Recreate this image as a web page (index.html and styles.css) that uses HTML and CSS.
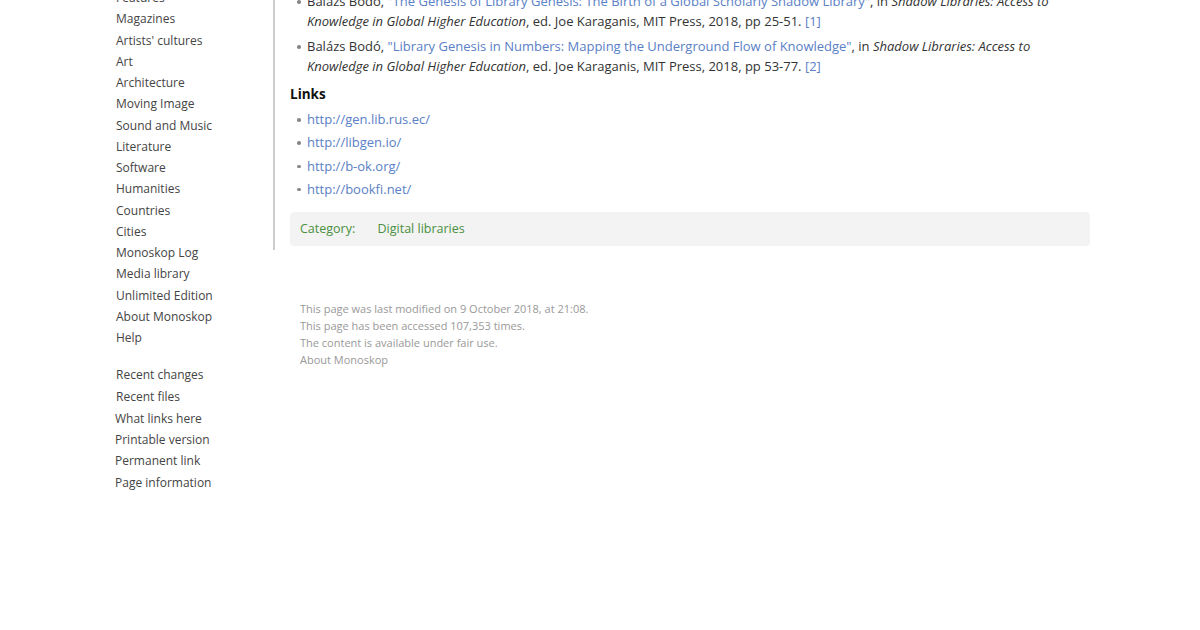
FILE: index.html
```html
<!DOCTYPE html>
<html lang="en">
<head>
    <meta charset="UTF-8">
    <meta name="viewport" content="width=device-width, initial-scale=1.0">
    <title>Library Genesis - Monoskop</title>
    <link rel="stylesheet" href="styles.css">
</head>
<body>
    <div class="page">

        <!-- Left navigation -->
        <div class="sidebar">
            <ul class="nav">
                <li><a href="#">Features</a></li>
                <li><a href="#">Magazines</a></li>
                <li><a href="#">Artists' cultures</a></li>
                <li><a href="#">Art</a></li>
                <li><a href="#">Architecture</a></li>
                <li><a href="#">Moving Image</a></li>
                <li><a href="#">Sound and Music</a></li>
                <li><a href="#">Literature</a></li>
                <li><a href="#">Software</a></li>
                <li><a href="#">Humanities</a></li>
                <li><a href="#">Countries</a></li>
                <li><a href="#">Cities</a></li>
                <li><a href="#">Monoskop Log</a></li>
                <li><a href="#">Media library</a></li>
                <li><a href="#">Unlimited Edition</a></li>
                <li><a href="#">About Monoskop</a></li>
                <li><a href="#">Help</a></li>
            </ul>
            <ul class="nav recent">
                <li><a href="#">Recent changes</a></li>
                <li><a href="#">Recent files</a></li>
            </ul>
            <!-- Toolbox -->
            <ul class="nav tools">
                <li><a href="#">What links here</a></li>
                <li><a href="#">Printable version</a></li>
                <li><a href="#">Permanent link</a></li>
                <li><a href="#">Page information</a></li>
            </ul>
        </div>

        <div class="main">
            <div class="content">
                <ul class="refs">
                    <li>Balázs Bodó, <a href="#">"The Genesis of Library Genesis: The Birth of a Global Scholarly Shadow Library"</a>, in <i>Shadow Libraries: Access to Knowledge in Global Higher Education</i>, ed. Joe Karaganis, MIT Press, 2018, pp 25-51. <a href="#">[1]</a></li>
                    <li>Balázs Bodó, <a href="#">"Library Genesis in Numbers: Mapping the Underground Flow of Knowledge"</a>, in <i>Shadow Libraries: Access to Knowledge in Global Higher Education</i>, ed. Joe Karaganis, MIT Press, 2018, pp 53-77. <a href="#">[2]</a></li>
                </ul>

                <h3>Links</h3>
                <ul class="links">
                    <li><a href="#">http://gen.lib.rus.ec/</a></li>
                    <li><a href="#">http://libgen.io/</a></li>
                    <li><a href="#">http://b-ok.org/</a></li>
                    <li><a href="#">http://bookfi.net/</a></li>
                </ul>

                <div class="catlinks">
                    <span class="cat-label">Category:</span>
                    <a href="#">Digital libraries</a>
                </div>
            </div>

            <!-- Page footer -->
            <div class="footer">
                <div>This page was last modified on 9 October 2018, at 21:08.</div>
                <div>This page has been accessed 107,353 times.</div>
                <div>The content is available under fair use.</div>
                <div><a href="#">About Monoskop</a></div>
            </div>
        </div>

    </div>
</body>
</html>
```

FILE: styles.css
```css
body {
    margin: 0;
    font-family: "Open Sans", "Noto Sans", sans-serif;
    color: #333;
    background: #fff;
}
a {
    text-decoration: none;
}
ul {
    list-style: none;
    margin: 0;
    padding: 0;
}

.page {
    display: flex;
    margin-top: -13px;
    padding-left: 116px;
}

/* sidebar */
.sidebar {
    width: 157px;
    flex-shrink: 0;
}
.nav li {
    line-height: 21.25px;
    font-size: 12px;
}
.nav a {
    color: #444;
}
.nav.recent {
    margin-top: 16px;
}
.nav.tools {
    margin-top: 1px;
    margin-left: -1px;
}

/* content */
.main {
    width: 817px;
}
.content {
    border-left: 2px solid #ccc;
    padding: 4px 0 4px 15px;
    font-size: 13px;
}
.content a {
    color: #5a80c6;
}
.refs li,
.links li {
    position: relative;
    padding-left: 17px;
    line-height: 20px;
    margin-bottom: 4px;
}
.refs li::before,
.links li::before {
    content: "";
    position: absolute;
    left: 7px;
    top: 9px;
    width: 3.5px;
    height: 3.5px;
    border-radius: 50%;
    background: #888;
}
.refs li {
    margin-bottom: 5px;
}
h3 {
    margin: 8px 0 5px;
    font-size: 13.5px;
    color: #111;
    line-height: 20px;
}
.links li {
    margin-bottom: 3.3px;
}
.catlinks {
    margin-top: 13px;
    background: #f3f3f3;
    border-radius: 4px;
    padding: 0 10px;
    height: 34px;
    line-height: 33px;
    font-size: 12.5px;
    color: #4a9040;
}
.content .catlinks a {
    color: #4a9040;
    margin-left: 19px;
}
.cat-label {
    color: #4a9040;
}

.footer {
    margin: 50px 0 0 27px;
    font-size: 11px;
    line-height: 17px;
    color: #999;
}
.footer a {
    color: #999;
}
```
